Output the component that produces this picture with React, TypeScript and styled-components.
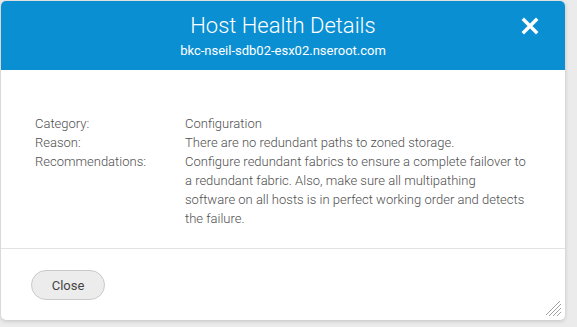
import React from "react";
import styled, { createGlobalStyle } from "styled-components";

const GlobalStyle = createGlobalStyle`
  html, body {
    margin: 0;
    padding: 0;
    background: #ebebeb;
    font-family: Roboto, "Liberation Sans", sans-serif;
  }
`;

/* ===================== STYLES ===================== */

const Page = styled.div`
  width: 577px;
  height: 327px;
  padding: 1px 0 0 1px;
  box-sizing: border-box;
  overflow: hidden;
`;

const Dialog = styled.div`
  position: relative;
  width: 564px;
  height: 319px;
  background: #fff;
  border-radius: 5px;
  box-shadow: 0 1px 4px rgba(0, 0, 0, 0.18);
  display: flex;
  flex-direction: column;
  overflow: hidden;
`;

const Header = styled.div`
  position: relative;
  height: 69px;
  background: #0b8fd3;
  color: #fff;
  display: flex;
  flex-direction: column;
  align-items: center;
  padding-top: 11px;
  box-sizing: border-box;
`;

const Title = styled.h1`
  margin: 0;
  font-size: 22px;
  font-weight: 300;
  line-height: 28px;
`;

const Subtitle = styled.div`
  font-size: 13px;
  font-weight: 400;
  line-height: 18px;
  margin-top: 2px;
`;

const CloseIcon = styled.button`
  position: absolute;
  top: 16px;
  right: 26px;
  width: 18px;
  height: 18px;
  padding: 0;
  border: none;
  background: none;
  cursor: pointer;
  display: flex;
`;

const Body = styled.div`
  flex: 1;
  padding: 44px 0 0 34px;
  border-bottom: 1px solid #e2e2e2;
`;

const Row = styled.div`
  display: flex;
  font-size: 13px;
  font-weight: 300;
  line-height: 19px;
  color: #4f4f4f;
`;

const Label = styled.div`
  width: 150px;
  flex-shrink: 0;
`;

const Value = styled.div`
  width: 343px;
`;

const Footer = styled.div`
  height: 71px;
  padding: 21px 0 0 30px;
  box-sizing: border-box;
`;

const CloseButton = styled.button`
  width: 74px;
  height: 30px;
  border-radius: 15px;
  border: 1px solid #c9c9c9;
  background: #ececec;
  color: #444;
  font-family: Roboto, "Liberation Sans", sans-serif;
  font-size: 13px;
  font-weight: 400;
  cursor: pointer;
`;

const Grip = styled.svg`
  position: absolute;
  right: 3px;
  bottom: 3px;
`;

/* ===================== COMPONENT ===================== */

const rows = [
  { label: "Category:", value: "Configuration" },
  { label: "Reason:", value: "There are no redundant paths to zoned storage." },
  {
    label: "Recommendations:",
    value:
      "Configure redundant fabrics to ensure a complete failover to a redundant fabric. Also, make sure all multipathing software on all hosts is in perfect working order and detects the failure.",
  },
];

const App: React.FC = () => {
  return (
    <Page>
      <GlobalStyle />
      <Dialog>
        <Header>
          <Title>Host Health Details</Title>
          <Subtitle>bkc-nseil-sdb02-esx02.nseroot.com</Subtitle>
          <CloseIcon aria-label="Close">
            <svg width="18" height="18" viewBox="0 0 18 18">
              <path
                d="M3 3 L15 15 M15 3 L3 15"
                stroke="#fff"
                strokeWidth="3.4"
                strokeLinecap="square"
              />
            </svg>
          </CloseIcon>
        </Header>

        <Body>
          {rows.map((r) => (
            <Row key={r.label}>
              <Label>{r.label}</Label>
              <Value>{r.value}</Value>
            </Row>
          ))}
        </Body>

        <Footer>
          <CloseButton>Close</CloseButton>
        </Footer>

        <Grip width="16" height="16" viewBox="0 0 16 16">
          <path
            d="M15 3 L3 15 M15 7 L7 15 M15 11 L11 15 M15 -1 L-1 15"
            stroke="#999"
            strokeWidth="0.9"
          />
        </Grip>
      </Dialog>
    </Page>
  );
};

export default App;
